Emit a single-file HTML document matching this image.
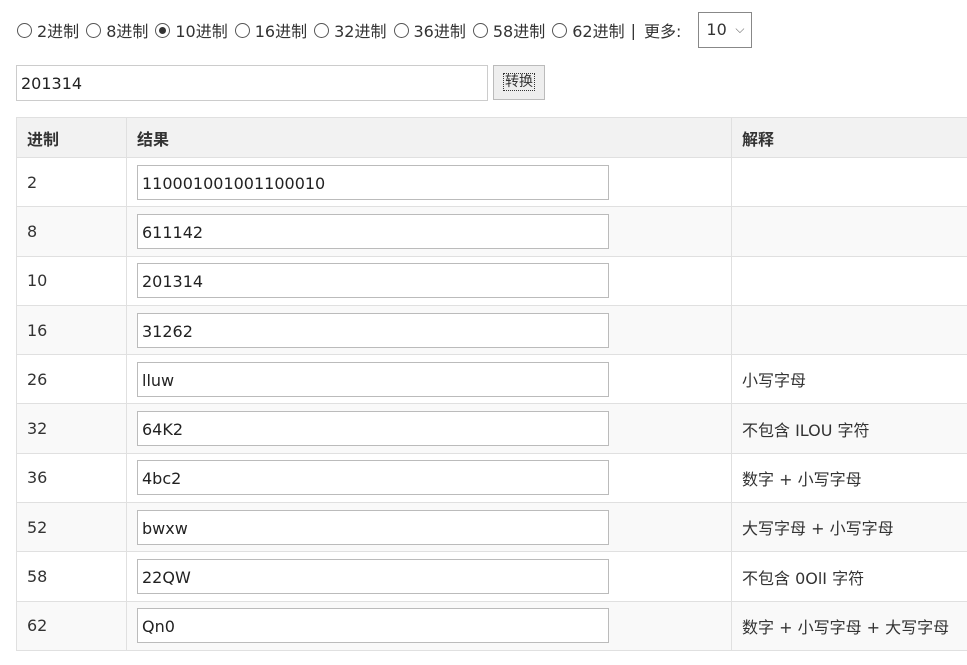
<!DOCTYPE html><html><head><meta charset="utf-8"><style>
body{margin:0;background:#fff;font-family:"DejaVu Sans","Noto Sans CJK SC",sans-serif;font-size:16px;color:#333;width:967px;height:665px;overflow:hidden;position:relative}
.top{position:absolute;left:16px;top:12px;height:36px;display:flex;align-items:center;white-space:nowrap}
.r{display:inline-block;width:15px;height:15px;border:1px solid #555;border-radius:50%;margin:0 5px 0 1px;box-sizing:border-box;position:relative}
.r.on:after{content:"";position:absolute;left:3px;top:3px;width:7px;height:7px;border-radius:50%;background:#333}
.lab{margin-right:6px}
.sel{display:inline-block;width:54px;height:36px;border:1px solid #888;box-sizing:border-box;line-height:34px;padding-left:7px;margin-left:17px;position:relative}
.sel:after{content:"⌵";position:absolute;right:7px;top:-1px;font-size:12px;color:#666}
.in{position:absolute;left:16px;top:65px;width:472px;height:36px;border:1px solid #ccc;box-sizing:border-box;line-height:36px;padding-left:4px;color:#222}
.btn{position:absolute;left:493px;top:65px;width:52px;height:35px;border:1px solid #bbb;background:#eee;box-sizing:border-box;font-size:14px;text-align:center;line-height:33px}
.btn span{border:1px dotted #333;padding:0 1px}
table{position:absolute;left:16px;top:117px;border-collapse:collapse;width:980px}
td,th{border:1px solid #e0e0e0;text-align:left;padding:0 10px;height:48.3px}
th{height:39px;background:#f2f2f2;font-weight:bold}
tr:nth-child(odd) td{background:#f9f9f9}
.c1{width:89px}.c2{width:584px}
.box{width:472px;height:35px;border:1px solid #bbb;box-sizing:border-box;background:#fff;line-height:35px;padding-left:4px;color:#222}
.d{font-size:16px}
</style></head><body>
<div class="top"><span class="r"></span><span class="lab">2进制</span><span class="r"></span><span class="lab">8进制</span><span class="r on"></span><span class="lab">10进制</span><span class="r"></span><span class="lab">16进制</span><span class="r"></span><span class="lab">32进制</span><span class="r"></span><span class="lab">36进制</span><span class="r"></span><span class="lab">58进制</span><span class="r"></span><span class="lab">62进制</span><span style="margin:0 8px 0 0">|</span>更多:<span class="sel">10</span></div>
<div class="in">201314</div><div class="btn"><span>转换</span></div>
<table>
<tr><th class="c1">进制</th><th class="c2">结果</th><th>解释</th></tr>
<tr><td>2</td><td><div class="box">110001001001100010</div></td><td></td></tr>
<tr><td>8</td><td><div class="box">611142</div></td><td></td></tr>
<tr><td>10</td><td><div class="box">201314</div></td><td></td></tr>
<tr><td>16</td><td><div class="box">31262</div></td><td></td></tr>
<tr><td>26</td><td><div class="box">lluw</div></td><td class="d">小写字母</td></tr>
<tr><td>32</td><td><div class="box">64K2</div></td><td class="d">不包含 ILOU 字符</td></tr>
<tr><td>36</td><td><div class="box">4bc2</div></td><td class="d">数字 + 小写字母</td></tr>
<tr><td>52</td><td><div class="box">bwxw</div></td><td class="d">大写字母 + 小写字母</td></tr>
<tr><td>58</td><td><div class="box">22QW</div></td><td class="d">不包含 0OlI 字符</td></tr>
<tr><td>62</td><td><div class="box">Qn0</div></td><td class="d">数字 + 小写字母 + 大写字母</td></tr>
</table>
</body></html>
